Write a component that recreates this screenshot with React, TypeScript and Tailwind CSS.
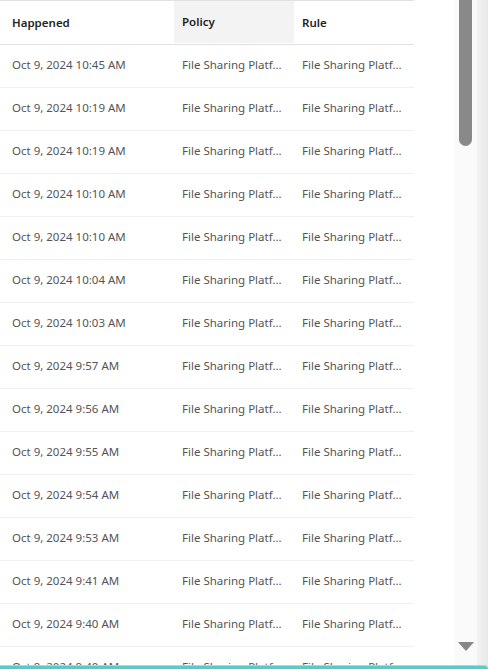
import React from "react";

const times = [
  "10:45 AM",
  "10:19 AM",
  "10:19 AM",
  "10:10 AM",
  "10:10 AM",
  "10:04 AM",
  "10:03 AM",
  "9:57 AM",
  "9:56 AM",
  "9:55 AM",
  "9:54 AM",
  "9:53 AM",
  "9:41 AM",
  "9:40 AM",
  "9:40 AM",
];

export default function App() {
  return (
    <div
      className="relative flex w-[488px] h-[669px] overflow-hidden bg-white"
      style={{ fontFamily: '"Noto Sans", "Open Sans", sans-serif' }}
    >
      <div className="w-[414px] shrink-0">
        <div className="flex h-[45px] border-t border-b border-[#e1e1e1] text-[11.5px] font-semibold text-[#242424]">
          <div className="w-[174px] pl-3 flex items-center">Happened</div>
          <div className="w-[120px] pl-2 flex items-center bg-[#f3f3f3] mb-px">Policy</div>
          <div className="w-[120px] pl-2 flex items-center">Rule</div>
        </div>
        {times.map((t, i) => (
          <div
            key={i}
            className="flex items-center pb-[2px] h-[43px] border-b border-[#f0f0f0] text-[11.5px] text-[#555555] whitespace-nowrap"
          >
            <div className="w-[174px] pl-3">Oct 9, 2024 {t}</div>
            <div className="w-[120px] pl-2">File Sharing Platf...</div>
            <div className="w-[120px] pl-2">File Sharing Platf...</div>
          </div>
        ))}
      </div>
      <div className="w-[40px] shrink-0 bg-white" />
      <div className="relative w-[23px] shrink-0 bg-[#fafafa]">
        <div className="absolute left-[5px] top-0 w-[13px] h-[146px] rounded-b-full bg-[#898989]" />
        <svg
          className="absolute left-[4px] top-[642px]"
          width="16"
          height="10"
          viewBox="0 0 16 10"
        >
          <polygon points="0,0 16,0 8,9" fill="#888888" />
        </svg>
      </div>
      <div className="w-[11px] shrink-0 bg-gradient-to-r from-[#f3f3f3] to-[#e8e8e8]" />
      <div className="absolute left-0 bottom-0 w-[488px] h-[4px] bg-[#5cc9c5] border-t border-[#9ddedb] rounded-tr-[6px]" />
    </div>
  );
}
